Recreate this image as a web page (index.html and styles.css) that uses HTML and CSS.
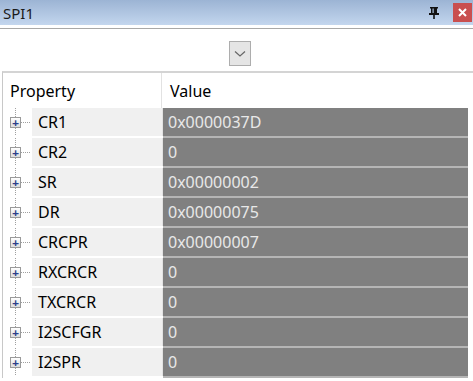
FILE: index.html
```html
<!DOCTYPE html>
<html lang="en">
<head>
    <meta charset="UTF-8">
    <title>SPI1</title>
    <link rel="stylesheet" href="styles.css">
</head>
<body>
    <div class="titlebar">
        <span class="title">SPI1</span>
        <span class="pin">
            <svg width="10" height="12" viewBox="0 0 10 12"><path d="M1 0h8v1.5H8V6h2v2H5.8v4H4.2V8H0V6h2V1.5H1z M3.5 1.5V6h1.2V1.5z" fill="#111" fill-rule="evenodd"/></svg>
        </span>
        <span class="close">
            <svg width="9" height="9" viewBox="0 0 9 9"><path d="M1 1l7 7M8 1l-7 7" stroke="#fff" stroke-width="2"/></svg>
        </span>
    </div>
    <div class="panel">
        <div class="toolbar">
            <button class="drop">
                <svg width="12" height="8" viewBox="0 0 12 8"><path d="M1 1.5l5 4.5 5-4.5" fill="none" stroke="#666" stroke-width="1.2"/></svg>
            </button>
        </div>
        <div class="grid">
            <div class="head">
                <div class="hcell prop">Property</div>
                <div class="hcell val">Value</div>
            </div>
            <div class="rows">
                <div class="row"><div class="tree"><span class="plus">+</span><span class="dots"></span></div><div class="name">CR1</div><div class="value">0x0000037D</div></div>
                <div class="row"><div class="tree"><span class="plus">+</span><span class="dots"></span></div><div class="name">CR2</div><div class="value">0</div></div>
                <div class="row"><div class="tree"><span class="plus">+</span><span class="dots"></span></div><div class="name">SR</div><div class="value">0x00000002</div></div>
                <div class="row"><div class="tree"><span class="plus">+</span><span class="dots"></span></div><div class="name">DR</div><div class="value">0x00000075</div></div>
                <div class="row"><div class="tree"><span class="plus">+</span><span class="dots"></span></div><div class="name">CRCPR</div><div class="value">0x00000007</div></div>
                <div class="row"><div class="tree"><span class="plus">+</span><span class="dots"></span></div><div class="name">RXCRCR</div><div class="value">0</div></div>
                <div class="row"><div class="tree"><span class="plus">+</span><span class="dots"></span></div><div class="name">TXCRCR</div><div class="value">0</div></div>
                <div class="row"><div class="tree"><span class="plus">+</span><span class="dots"></span></div><div class="name">I2SCFGR</div><div class="value">0</div></div>
                <div class="row"><div class="tree"><span class="plus">+</span><span class="dots"></span></div><div class="name">I2SPR</div><div class="value">0</div></div>
            </div>
        </div>
    </div>
</body>
</html>
```

FILE: styles.css
```css
body {
    margin: 0;
    width: 473px;
    height: 381px;
    overflow: hidden;
    background: #ffffff;
    font-family: "Noto Sans", "Open Sans", sans-serif;
    font-size: 16px;
}
.titlebar {
    height: 25px;
    display: flex;
    align-items: center;
    padding-left: 3px;
    background: linear-gradient(#9cb4d4, #c3d6ee);
}
.title {
    flex: 1;
    color: #1a1a1a;
    font-size: 15px;
}
.pin {
    display: flex;
    margin-right: 14px;
}
.close {
    width: 19px;
    height: 19px;
    margin-right: 1px;
    background: #c94f4f;
    display: flex;
    align-items: center;
    justify-content: center;
}
.panel {
    margin-top: 3px;
    border-top: 1px solid #a8a8a8;
}
.toolbar {
    height: 42px;
    display: flex;
    align-items: flex-start;
    justify-content: center;
    padding-left: 6px;
}
.drop {
    margin-top: 12px;
    width: 22px;
    height: 25px;
    padding: 0;
    border: 1px solid #adadad;
    background: #e5e5e5;
    display: flex;
    align-items: center;
    justify-content: center;
}
.grid {
    margin-left: 2px;
    width: 470px;
    border-top: 2px solid #d4d4d4;
    border-left: 1px solid #c8c8c8;
}
.head {
    display: flex;
    height: 35px;
}
.hcell {
    display: flex;
    align-items: center;
}
.prop {
    width: 151px;
    padding-left: 7px;
    border-right: 1px solid #e2e2e2;
}
.val {
    padding-left: 8px;
}
.row {
    display: flex;
    height: 28px;
    border-bottom: 2px solid #ffffff;
}
.tree {
    width: 29px;
    display: flex;
    align-items: center;
    padding-left: 7px;
    box-sizing: border-box;
    background-image: linear-gradient(#a0a0a0 50%, transparent 50%);
    background-size: 1px 2px;
    background-repeat: repeat-y;
    background-position: 12px 0;
}
.plus {
    width: 9px;
    height: 9px;
    border: 1px solid #9a9a9a;
    background: linear-gradient(#ffffff, #dcdcdc);
    color: #2c3d8a;
    font-size: 11px;
    line-height: 9px;
    text-align: center;
    font-family: "DejaVu Sans Mono", monospace;
    font-weight: bold;
}
.dots {
    width: 10px;
    height: 1px;
    background-image: linear-gradient(90deg, #a0a0a0 50%, transparent 50%);
    background-size: 2px 1px;
}
.name {
    width: 124px;
    padding-left: 6px;
    background: #f0f0f0;
    color: #000000;
    display: flex;
    align-items: center;
    border-right: 1px solid #e2e2e2;
}
.value {
    width: 300px;
    padding-left: 5px;
    background: #808080;
    color: #e8e8e8;
    display: flex;
    align-items: center;
    border-bottom: 2px solid #b5b5b5;
    margin-bottom: -2px;
}
```
